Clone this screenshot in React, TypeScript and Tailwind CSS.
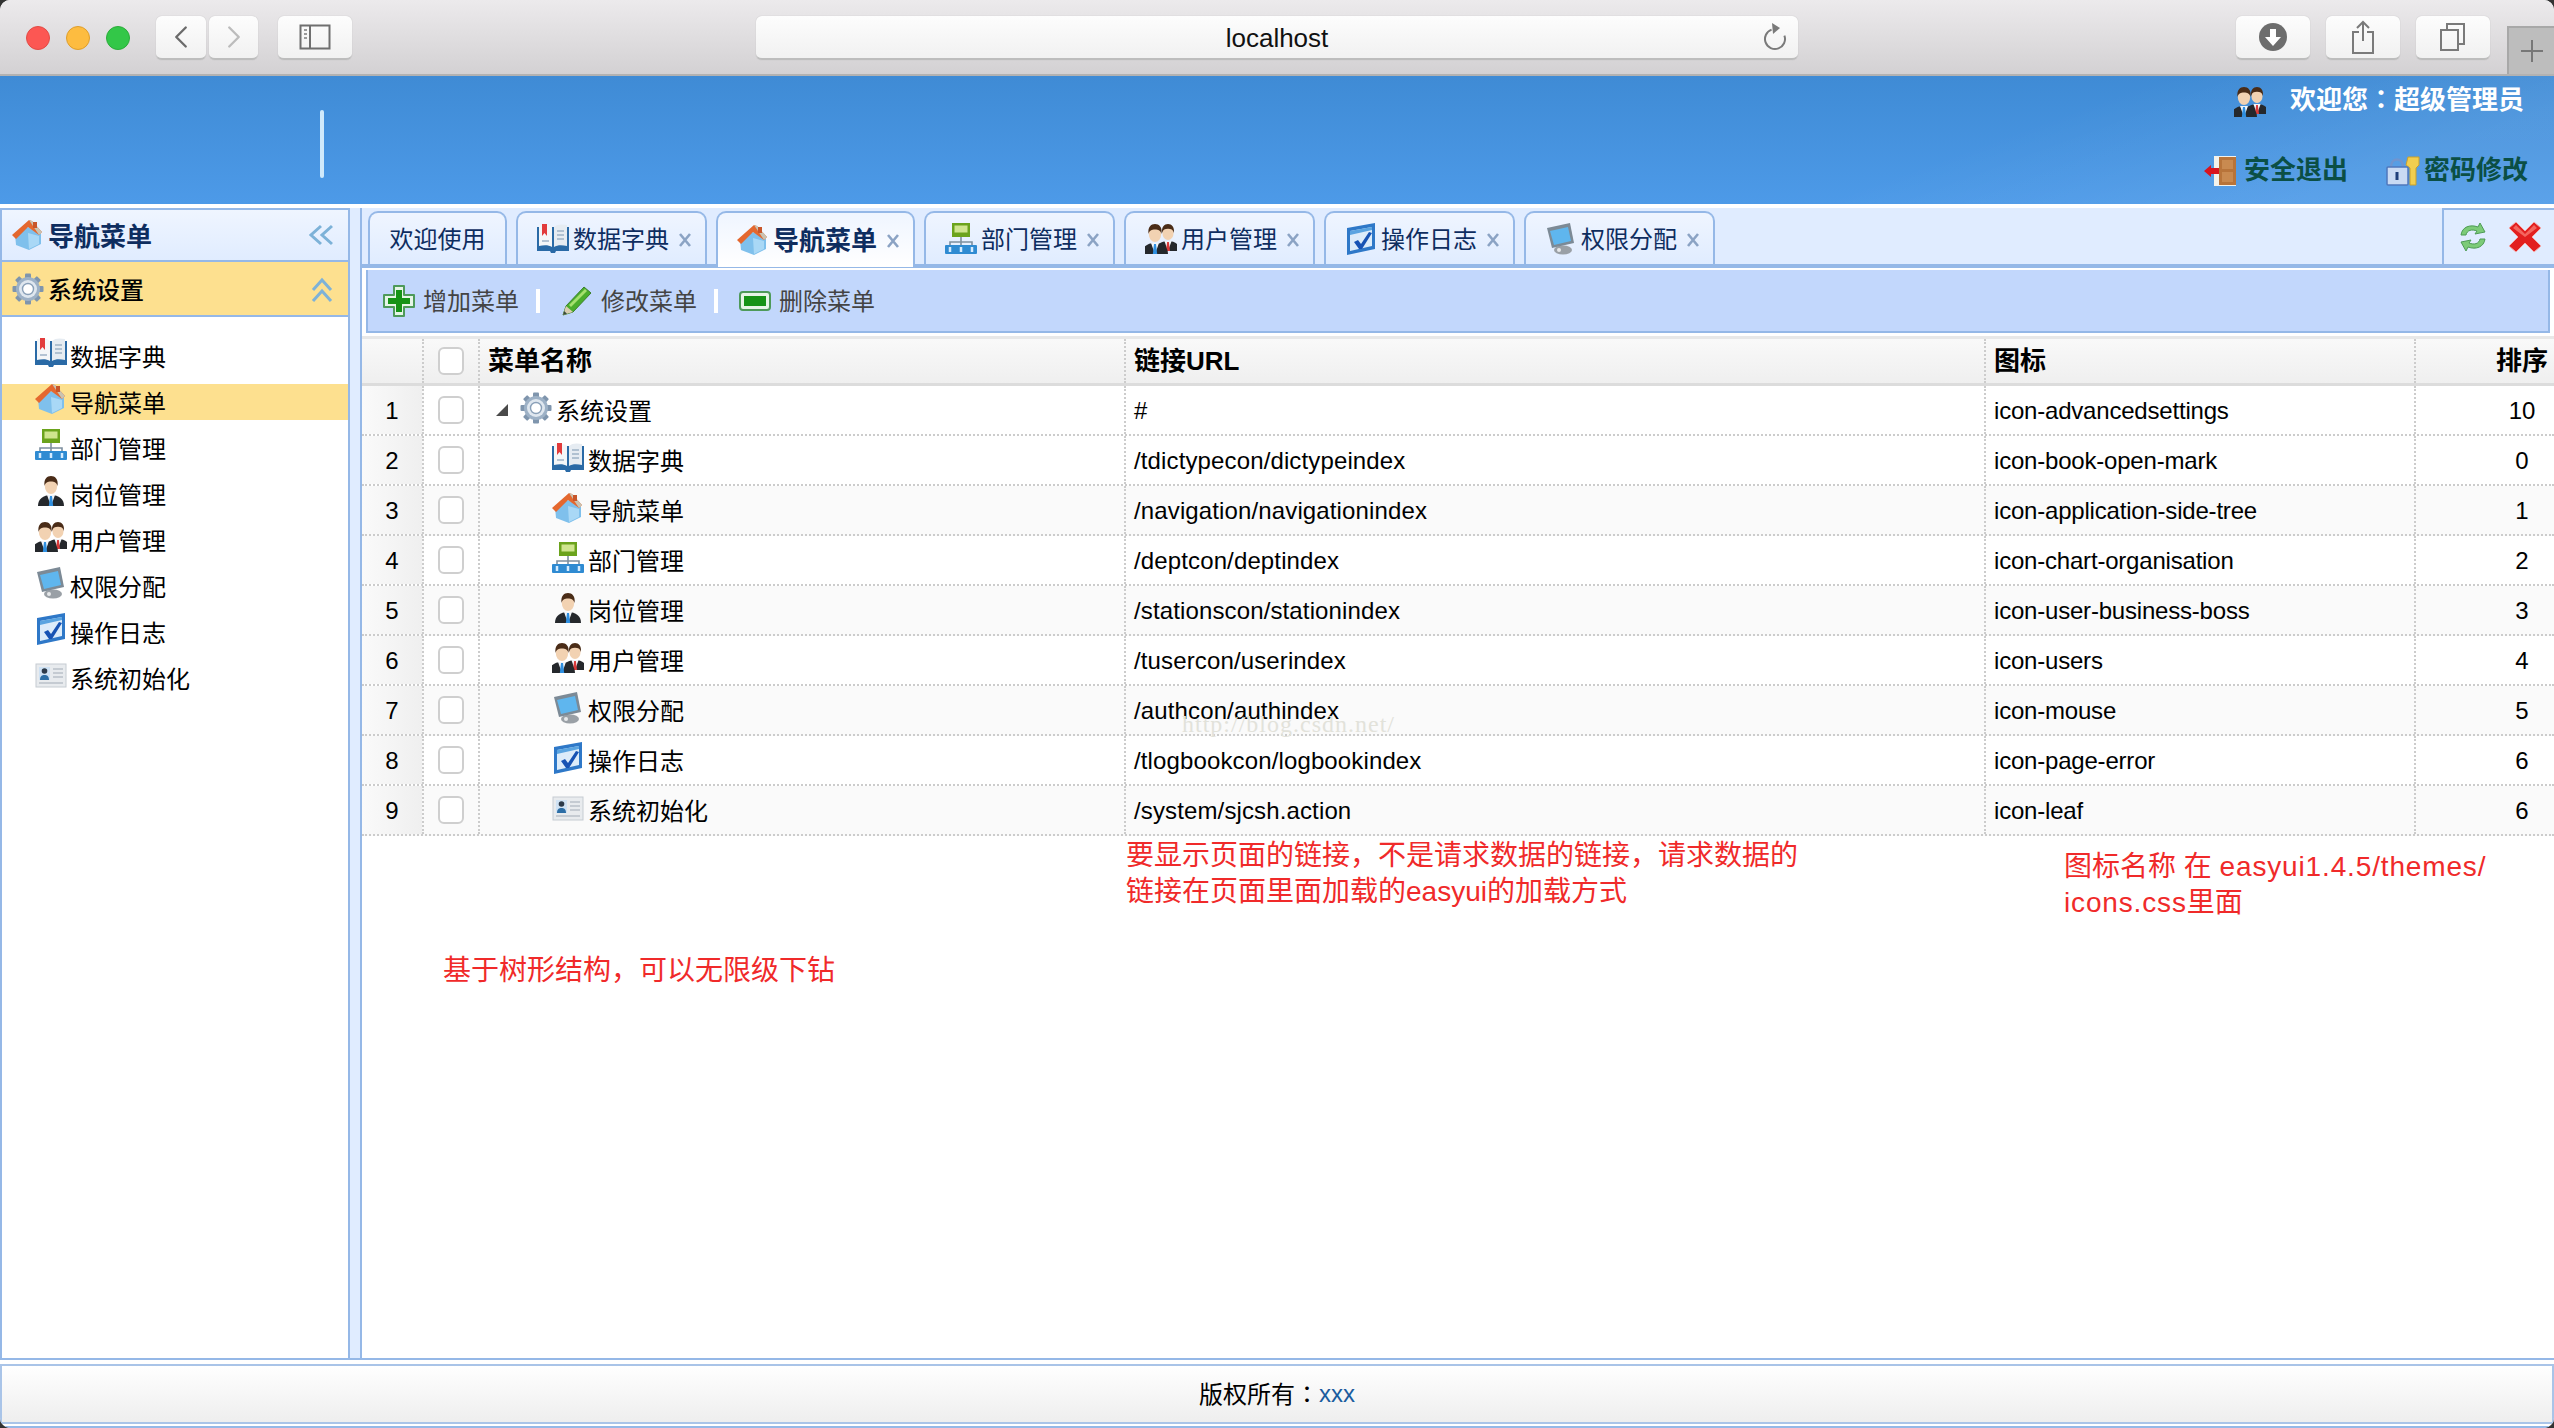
import { ChevronLeft, ChevronRight } from "lucide-react";
import type { ReactNode } from "react";

type IconName = "book" | "house" | "org" | "user" | "users" | "monitor" | "log" | "card" | "gear";

function Gear({ size = 32 }: { size?: number }) {
  const teeth = [0, 45, 90, 135, 180, 225, 270, 315];
  return (
    <svg width={size} height={size} viewBox="0 0 32 32" className="shrink-0 blur-[0.6px]">
      {teeth.map((a) => (
        <rect key={a} x="13" y="0.500" width="6" height="7" rx="1" fill="#7f95ad" transform={`rotate(${a} 16 16)`} />
      ))}
      <circle cx="16" cy="16" r="12" fill="#9db1c6" />
      <circle cx="16" cy="16" r="9" fill="#dfe7ef" />
      <circle cx="16" cy="16" r="5.500" fill="#fff" stroke="#8aa0b8" strokeWidth="1.400" />
    </svg>
  );
}

function Person({ x = 16, tie = "#2f8fe0", scale = 1 }: { x?: number; tie?: string; scale?: number }) {
  return (
    <g transform={`translate(${x} 0) scale(${scale}) translate(-16 0)`}>
      <path d="M3 31c0-7 5-11 13-11s13 4 13 11z" fill="#25282c" />
      <path d="M12 20h8l-4 11z" fill="#f3f6fa" />
      <path d="M15 21h2l1.200 10h-4.400z" fill={tie} />
      <ellipse cx="16" cy="11" rx="6.200" ry="8" fill="#f2d2b2" />
      <path d="M9.500 11C8.500 4 12 1 16 1s7.500 3 6.500 10c-1-3.500-3-4.500-6.500-4.500S10.500 7.500 9.500 11z" fill="#4a2c17" />
    </g>
  );
}

function MenuIcon({ name, size = 32 }: { name: IconName; size?: number }) {
  if (name === "gear") return <Gear size={size} />;
  return (
    <svg width={size} height={size} viewBox="0 0 32 32" className="shrink-0 blur-[0.6px]">
      {name === "book" && (
        <>
          <path d="M0 4h32v24H19l-1 2h-4l-1-2H0z" fill="#2a6aa6" />
          <path d="M2 2c5-1 10-1 13 2v20c-3-2-8-2-13-1z" fill="#f4f6f8" />
          <path d="M30 2c-5-1-10-1-13 2v20c3-2 8-2 13-1z" fill="#e6ecf2" />
          <path d="M5 1h5v12l-2.500-3L5 13z" fill="#e23b3b" />
          <path d="M20 8h7M20 12h7M20 16h7M5 18h7" stroke="#9fb2c6" strokeWidth="1.500" />
        </>
      )}
      {name === "house" && (
        <>
          <path d="M3 15 16 8l13 7v10l-12 6-13-5z" fill="#7fc0ec" />
          <path d="M16 14 27 17v8l-10 5z" fill="#a9d8f6" />
          <path d="M0 16 17 1l3 1 10 11-3 3L16 8 4 20z" fill="#e4682f" />
          <path d="M17 1l3 1 10 11-3 3z" fill="#c9c3b2" />
          <path d="M21 3h4v6h-4z" fill="#c8562a" />
        </>
      )}
      {name === "org" && (
        <>
          <rect x="7" y="0" width="18" height="14" fill="#6ba31c" />
          <rect x="9.500" y="2.500" width="13" height="7" fill="#cfe58e" />
          <path d="M16 14v4M5 23v-4h22v4M16 18v5" stroke="#7d8f9f" strokeWidth="1.600" fill="none" />
          <rect x="0" y="22" width="32" height="9" rx="1" fill="#2f8bd2" />
          <path d="M5 24v5M16 24v5M27 24v5" stroke="#d5ecff" strokeWidth="2.500" />
        </>
      )}
      {name === "user" && <Person />}
      {name === "users" && (
        <>
          <Person x={23} tie="#d93a3a" scale={0.9} />
          <Person x={10} />
        </>
      )}
      {name === "monitor" && (
        <>
          <ellipse cx="18" cy="27" rx="9" ry="4.500" fill="#9aa0a6" />
          <circle cx="14" cy="27" r="2" fill="#e6e8ea" />
          <path d="M2 5 25 0l4 20-22 5z" fill="#7c8a96" />
          <path d="M5 8 23 4l3 14-17 4z" fill="#5fb6ee" />
        </>
      )}
      {name === "log" && (
        <>
          <path d="M2 5 30 0v26L2 32z" fill="#2e78c8" />
          <path d="M5 8 27 4v19L5 28z" fill="#dcecfa" />
          <path d="M5 8 27 4v3L5 12z" fill="#5aa4e0" />
          <path d="M9 19l4-2 3 4 8-12 3 1-10 16h-3z" fill="#1753b4" />
        </>
      )}
      {name === "card" && (
        <>
          <rect x="1" y="5" width="30" height="23" fill="#e8ebee" stroke="#c6ccd2" />
          <rect x="4" y="8" width="11" height="13" fill="#cfe2f4" />
          <circle cx="9.500" cy="12" r="2.800" fill="#2c3a4a" />
          <path d="M5 21c0-4 2-5 4.500-5s4.500 1 4.500 5z" fill="#2c6ea6" />
          <path d="M18 10h10M18 14h10M18 18h10M4 24h24" stroke="#b9c1c9" strokeWidth="1.500" />
        </>
      )}
    </svg>
  );
}

function PlusIcon() {
  return (
    <svg width="32" height="32" viewBox="0 0 32 32" className="shrink-0 blur-[0.4px]">
      <path d="M11 1h10v9h10v12H21v9H11v-9H1V10h10z" fill="#e6f5e6" stroke="#4e9a5a" strokeWidth="2" strokeLinejoin="round" />
      <path d="M13 5h6v8h8v6h-8v8h-6v-8H5v-6h8z" fill="#169316" />
    </svg>
  );
}

function PencilIcon() {
  return (
    <svg width="32" height="32" viewBox="0 0 32 32" className="shrink-0 blur-[0.3px]">
      <path d="M2 30l3-9L23 2l7 6-18 19z" fill="#4aad2c" stroke="#3a7f2a" strokeWidth="1" />
      <path d="M8 20 24 4l2 2L10 22z" fill="#a5e06e" />
      <path d="M2 30l3-9 7 6z" fill="#d9cdb0" />
      <path d="M2 30l1.200-4 2.800 2.800z" fill="#3a4a3a" />
    </svg>
  );
}

function MinusIcon() {
  return (
    <svg width="32" height="32" viewBox="0 0 32 32" className="shrink-0 blur-[0.4px]">
      <rect x="1" y="7" width="30" height="18" rx="3" fill="#e6f5e6" stroke="#4e9a5a" strokeWidth="2" />
      <rect x="5" y="11" width="22" height="10" fill="#169316" />
    </svg>
  );
}

function RefreshIcon() {
  return (
    <svg width="30" height="32" viewBox="0 0 30 32" className="shrink-0 blur-[0.4px]">
      <path d="M3 14C4 6 12 3 20 6l2-4 5 9-10 2 2-3C14 8 9 9 8 14z" fill="#7ccb78" stroke="#4d9a55" strokeWidth="1" />
      <path d="M27 18c-1 8-9 11-17 8l-2 4-5-9 10-2-2 3c5 2 10 1 11-4z" fill="#7ccb78" stroke="#4d9a55" strokeWidth="1" />
    </svg>
  );
}

function RedCloseIcon() {
  return (
    <svg width="34" height="32" viewBox="0 0 34 32" className="shrink-0 blur-[0.3px]">
      <path d="M8 1l9 9 9-9 7 6-9 9 9 9-7 6-9-9-9 9-7-6 9-9-9-9z" fill="#e21f1f" stroke="#f2a9a9" strokeWidth="1" strokeLinejoin="round" />
      <path d="M8 4l9 9 9-9 3 3-12 9L5 7z" fill="#f4665f" />
    </svg>
  );
}

function DoorIcon() {
  return (
    <svg width="32" height="32" viewBox="0 0 32 32" className="shrink-0 blur-[0.3px]">
      <rect x="10" y="1" width="22" height="30" fill="#f2f2ec" />
      <path d="M15 2h17v28H15z" fill="#b8743a" />
      <path d="M18 5h11v9H18zM18 17h11v10H18z" fill="#c98a50" />
      <path d="M0 16l7-6v3h8v6H7v3z" fill="#d8141f" />
    </svg>
  );
}

function KeyIcon() {
  return (
    <svg width="34" height="32" viewBox="0 0 34 32" className="shrink-0 blur-[0.3px]">
      <path d="M22 2h11v8l-3 3v17h-6V13l-4-3z" fill="#f2ce4f" stroke="#c9a02c" strokeWidth="1" />
      <path d="M5 12c0-10 12-10 12 0" fill="none" stroke="#6f95cf" strokeWidth="2.500" />
      <rect x="1" y="12" width="21" height="18" rx="1" fill="#c9daf3" stroke="#4f78bd" strokeWidth="1.500" />
      <rect x="9.500" y="17" width="3" height="8" fill="#1f3f7a" />
    </svg>
  );
}

function DoubleChevron({ up = false }: { up?: boolean }) {
  return (
    <svg width="24" height="28" viewBox="0 0 24 28" className={up ? "shrink-0" : "shrink-0 -rotate-90"}>
      <path d="M3 13 12 3l9 10M3 24l9-10 9 10" fill="none" stroke="#7db2d8" strokeWidth="3" />
    </svg>
  );
}

function ToolbarButton({ icon, label }: { icon: ReactNode; label: string }) {
  return (
    <div className="flex items-center gap-[8px] text-[#444]">
      {icon}
      <span className="mt-[2px]">{label}</span>
    </div>
  );
}

function Tab({ icon, label, active = false }: { icon: IconName; label: string; active?: boolean }) {
  return (
    <div
      className={
        "relative flex shrink-0 items-center rounded-t-[10px] border-x-2 border-t-2 border-[#95b8e7] pl-[19px] text-[#0e2d5f] " +
        (active
          ? "z-10 -mb-[3px] h-[56px] w-[199px] bg-[linear-gradient(to_bottom,#eff5ff,#ffffff)]"
          : "h-[53px] w-[191px] bg-[linear-gradient(to_bottom,#eff5ff,#e0ecff)]")
      }
    >
      <MenuIcon name={icon} />
      <span className={"ml-[4px] mt-[2px] " + (active ? "text-[26px] font-bold" : "")}>{label}</span>
      <svg width="14" height="16" viewBox="0 0 14 16" className="ml-[9px] mt-[2px] shrink-0">
        <path d="M2 2l10 12M12 2 2 14" stroke="#8ba3c4" strokeWidth="2.600" />
      </svg>
    </div>
  );
}

const SIDE_ITEMS: { icon: IconName; label: string; active?: boolean }[] = [
  { icon: "book", label: "数据字典" },
  { icon: "house", label: "导航菜单", active: true },
  { icon: "org", label: "部门管理" },
  { icon: "user", label: "岗位管理" },
  { icon: "users", label: "用户管理" },
  { icon: "monitor", label: "权限分配" },
  { icon: "log", label: "操作日志" },
  { icon: "card", label: "系统初始化" },
];

const ROWS: { icon: IconName; name: string; url: string; cls: string; sort: number }[] = [
  { icon: "gear", name: "系统设置", url: "#", cls: "icon-advancedsettings", sort: 10 },
  { icon: "book", name: "数据字典", url: "/tdictypecon/dictypeindex", cls: "icon-book-open-mark", sort: 0 },
  { icon: "house", name: "导航菜单", url: "/navigation/navigationindex", cls: "icon-application-side-tree", sort: 1 },
  { icon: "org", name: "部门管理", url: "/deptcon/deptindex", cls: "icon-chart-organisation", sort: 2 },
  { icon: "user", name: "岗位管理", url: "/stationscon/stationindex", cls: "icon-user-business-boss", sort: 3 },
  { icon: "users", name: "用户管理", url: "/tusercon/userindex", cls: "icon-users", sort: 4 },
  { icon: "monitor", name: "权限分配", url: "/authcon/authindex", cls: "icon-mouse", sort: 5 },
  { icon: "log", name: "操作日志", url: "/tlogbookcon/logbookindex", cls: "icon-page-error", sort: 6 },
  { icon: "card", name: "系统初始化", url: "/system/sjcsh.action", cls: "icon-leaf", sort: 6 },
];

function Checkbox() {
  return <div className="h-[28px] w-[26px] rounded-[6px] border-2 border-[#cfcfcf] bg-white" />;
}

function BrowserButton({ children, className }: { children: ReactNode; className: string }) {
  return (
    <div
      className={
        "flex h-[44px] items-center justify-center rounded-[6px] border-b-2 border-[#bdbdbd] bg-[linear-gradient(to_bottom,#fdfdfd,#f1f1f1)] shadow-[0_0_1px_#aaa] " +
        className
      }
    >
      {children}
    </div>
  );
}

export default function App() {
  return (
    <div className="h-[1428px] w-[2554px] overflow-hidden bg-[#333] font-['Liberation_Sans','Noto_Sans_CJK_SC',sans-serif] text-[24px] text-black">
      <div className="relative flex h-full flex-col overflow-hidden rounded-[10px] bg-white">
        {/* browser chrome */}
        <div className="relative flex h-[76px] shrink-0 items-center border-b-2 border-[#b2b2b2] bg-[linear-gradient(to_bottom,#eceaec,#d3d1d3)] pl-[26px] pt-[2px]">
          <div className="flex gap-[16px]">
            <span className="h-[24px] w-[24px] rounded-full border border-[#e24b45] bg-[#fc5753]" />
            <span className="h-[24px] w-[24px] rounded-full border border-[#df9e2b] bg-[#fdbc40]" />
            <span className="h-[24px] w-[24px] rounded-full border border-[#2bac3a] bg-[#33c748]" />
          </div>
          <BrowserButton className="ml-[26px] w-[50px]">
            <ChevronLeft size={38} strokeWidth={1.5} className="text-[#6b6b6b]" />
          </BrowserButton>
          <BrowserButton className="ml-[3px] w-[49px]">
            <ChevronRight size={38} strokeWidth={1.5} className="text-[#bcbcbc]" />
          </BrowserButton>
          <BrowserButton className="ml-[20px] w-[74px]">
            <svg width="32" height="26" viewBox="0 0 32 26">
              <rect x="1.500" y="1.500" width="29" height="23" fill="none" stroke="#6f6f6f" strokeWidth="2" />
              <path d="M11 1.500v23" stroke="#6f6f6f" strokeWidth="2" />
              <path d="M5 6h3M5 10h3M5 14h3" stroke="#9a9a9a" strokeWidth="2" />
            </svg>
          </BrowserButton>
          <BrowserButton className="relative ml-[404px] w-[1042px]">
            <span className="mt-[3px] text-[26px] text-[#111]">localhost</span>
            <svg width="26" height="30" viewBox="0 0 26 30" className="absolute right-[10px] top-[6px]">
              <path d="M13 7a10 10 0 1 0 10 10" fill="none" stroke="#7a7a7a" strokeWidth="2" transform="rotate(-20 13 17)" />
              <path d="M10 1l8 5-7 6z" fill="#7a7a7a" />
            </svg>
          </BrowserButton>
          <BrowserButton className="ml-[438px] w-[74px]">
            <svg width="28" height="28" viewBox="0 0 28 28">
              <circle cx="14" cy="14" r="14" fill="#6d6d6d" />
              <path d="M11 6h6v8h5l-8 9-8-9h5z" fill="#fff" />
            </svg>
          </BrowserButton>
          <BrowserButton className="ml-[16px] w-[74px]">
            <svg width="24" height="34" viewBox="0 0 24 34">
              <path d="M8 12H2v21h20V12h-6M12 21V2M6 8l6-6 6 6" fill="none" stroke="#7a7a7a" strokeWidth="2" />
            </svg>
          </BrowserButton>
          <BrowserButton className="ml-[16px] w-[74px]">
            <svg width="26" height="28" viewBox="0 0 26 28">
              <path d="M7 6V1h17v20h-5" fill="none" stroke="#7a7a7a" strokeWidth="2" />
              <rect x="1" y="7" width="17" height="20" fill="none" stroke="#7a7a7a" strokeWidth="2" />
            </svg>
          </BrowserButton>
          <div className="ml-[17px] flex h-[48px] flex-1 items-center justify-center self-end border-l-2 border-t-2 border-[#a8a8a8] bg-[#bdbdbd]">
            <svg width="24" height="24" viewBox="0 0 24 24">
              <path d="M12 1v22M1 12h22" stroke="#777" strokeWidth="2" />
            </svg>
          </div>
        </div>

        {/* app header */}
        <div className="relative h-[128px] shrink-0 bg-[linear-gradient(to_bottom,#3f8bd5,#4d9ae8)]">
          <div className="absolute left-[320px] top-[34px] h-[68px] w-[4px] rounded-full bg-[#cfe9fb]" />
          <div className="absolute inset-y-0 right-0 w-[1000px] bg-[linear-gradient(160deg,rgba(255,255,255,0)_45%,rgba(255,255,255,0.08)_80%)]" />
          <div className="absolute left-[2234px] top-[8px] flex items-center gap-[24px] text-[26px] font-bold text-white">
            <MenuIcon name="users" />
            <span className="-mt-[6px]">
              欢迎您<span className="font-['Noto_Sans_CJK_TC',sans-serif]">：</span>超级管理员
            </span>
          </div>
          <div className="absolute left-[2204px] top-[75px] flex items-center text-[26px] font-bold text-[#0b4f45]">
            <DoorIcon />
            <span className="ml-[8px]">安全退出</span>
            <span className="ml-[38px]">
              <KeyIcon />
            </span>
            <span className="ml-[4px]">密码修改</span>
          </div>
        </div>

        <div className="h-[4px] shrink-0 bg-white" />

        {/* body */}
        <div className="relative flex min-h-0 flex-1">
          {/* west panel */}
          <div className="flex w-[350px] shrink-0 flex-col border-x-2 border-[#95b8e7]">
            <div className="flex h-[54px] shrink-0 items-center border-y-2 border-[#95b8e7] bg-[linear-gradient(to_bottom,#eff5ff,#e0ecff)] pl-[10px] pr-[14px] text-[26px] font-bold text-[#0e2d5f]">
              <MenuIcon name="house" />
              <span className="ml-[4px] mt-[4px]">导航菜单</span>
              <span className="ml-auto">
                <DoubleChevron />
              </span>
            </div>
            <div className="flex h-[55px] shrink-0 items-center border-b-2 border-[#95b8e7] bg-[#fde08f] pl-[10px] pr-[14px] font-medium">
              <Gear />
              <span className="ml-[4px] mt-[5px]">系统设置</span>
              <span className="ml-auto mt-[4px]">
                <DoubleChevron up />
              </span>
            </div>
            <div className="flex flex-1 flex-col gap-[10px] pt-[21px]">
              {SIDE_ITEMS.map((item) => (
                <div
                  key={item.label}
                  className={"flex h-[36px] items-center pl-[33px] " + (item.active ? "bg-[#fde08f]" : "")}
                >
                  <span className="-mt-[6px]">
                    <MenuIcon name={item.icon} />
                  </span>
                  <span className="ml-[3px] mt-[4px]">{item.label}</span>
                </div>
              ))}
            </div>
          </div>

          {/* splitter */}
          <div className="w-[12px] shrink-0 border-r-2 border-[#95b8e7] bg-[#e0ecff]" />

          {/* center */}
          <div className="relative flex min-w-0 flex-1 flex-col">
            <div className="flex h-[60px] shrink-0 items-end gap-[9px] border-b-[4px] border-[#95b8e7] bg-[#e0ecff] pl-[6px]">
              <div className="flex h-[53px] w-[139px] shrink-0 items-center justify-center rounded-t-[10px] border-x-2 border-t-2 border-[#95b8e7] bg-[linear-gradient(to_bottom,#eff5ff,#e0ecff)] text-[#0e2d5f]">
                <span className="mt-[2px]">欢迎使用</span>
              </div>
              <Tab icon="book" label="数据字典" />
              <Tab icon="house" label="导航菜单" active />
              <Tab icon="org" label="部门管理" />
              <Tab icon="users" label="用户管理" />
              <Tab icon="log" label="操作日志" />
              <Tab icon="monitor" label="权限分配" />
              <div className="ml-auto flex h-[56px] w-[112px] shrink-0 items-center gap-[20px] self-start border-l-2 border-t-2 border-[#95b8e7] pl-[14px]">
                <RefreshIcon />
                <RedCloseIcon />
              </div>
            </div>

            <div className="flex min-h-0 flex-1 flex-col pt-[2px]">
              <div className="mx-[4px] flex h-[63px] shrink-0 items-center border-x-2 border-b-2 border-[#95b8e7] bg-[#c2d7fc] pl-[15px]">
                <ToolbarButton icon={<PlusIcon />} label="增加菜单" />
                <span className="ml-[17px] h-[24px] w-[4px] bg-white" />
                <span className="ml-[21px]">
                  <ToolbarButton icon={<PencilIcon />} label="修改菜单" />
                </span>
                <span className="ml-[17px] h-[24px] w-[4px] bg-white" />
                <span className="ml-[21px]">
                  <ToolbarButton icon={<MinusIcon />} label="删除菜单" />
                </span>
              </div>

              {/* grid head */}
              <div className="mt-[3px] flex h-[50px] shrink-0 border-y-[3px] border-t-[#e8e8e8] border-b-[#dcdcdc] bg-[linear-gradient(to_bottom,#f9f9f9,#efefef)] text-[26px] font-bold">
                <div className="w-[62px] shrink-0 border-r-2 border-dotted border-[#ccc]" />
                <div className="flex w-[56px] shrink-0 items-center justify-center border-r-2 border-dotted border-[#ccc]">
                  <Checkbox />
                </div>
                <div className="flex w-[646px] shrink-0 items-center border-r-2 border-dotted border-[#ccc] pl-[8px]">菜单名称</div>
                <div className="flex w-[860px] shrink-0 items-center border-r-2 border-dotted border-[#ccc] pl-[8px]">链接URL</div>
                <div className="flex w-[430px] shrink-0 items-center border-r-2 border-dotted border-[#ccc] pl-[8px]">图标</div>
                <div className="flex flex-1 items-center justify-end pr-[6px]">排序</div>
              </div>

              {ROWS.map((row, index) => (
                <div
                  key={row.name}
                  className={
                    "flex h-[50px] shrink-0 border-b-2 border-dotted border-[#ccc] " +
                    (index % 2 === 0 && index > 0 ? "bg-[#fafafa]" : "bg-white")
                  }
                >
                  <div className="flex w-[62px] shrink-0 items-center justify-center border-r-2 border-dotted border-[#ccc] bg-[linear-gradient(to_right,#fafafa,#efefef)] pt-[2px]">
                    {index + 1}
                  </div>
                  <div className="flex w-[56px] shrink-0 items-center justify-center border-r-2 border-dotted border-[#ccc]">
                    <Checkbox />
                  </div>
                  <div className="flex w-[646px] shrink-0 items-center border-r-2 border-dotted border-[#ccc]">
                    {index === 0 ? (
                      <>
                        <svg width="14" height="14" viewBox="0 0 14 14" className="ml-[15px] shrink-0">
                          <path d="M13 1v12H1z" fill="#4a4a4a" />
                        </svg>
                        <span className="-mt-[4px] ml-[11px]">
                          <MenuIcon name={row.icon} />
                        </span>
                        <span className="ml-[4px] mt-[4px]">{row.name}</span>
                      </>
                    ) : (
                      <>
                        <span className="-mt-[4px] ml-[72px]">
                          <MenuIcon name={row.icon} />
                        </span>
                        <span className="ml-[4px] mt-[4px]">{row.name}</span>
                      </>
                    )}
                  </div>
                  <div className="flex w-[860px] shrink-0 items-center border-r-2 border-dotted border-[#ccc] pl-[8px] pt-[2px] tracking-[0.13px]">{row.url}</div>
                  <div className="flex w-[430px] shrink-0 items-center border-r-2 border-dotted border-[#ccc] pl-[8px] pt-[2px] tracking-[-0.2px]">{row.cls}</div>
                  <div className="flex flex-1 items-center justify-end pr-[14px] pt-[2px]">
                    <span className="w-[36px] text-center">{row.sort}</span>
                  </div>
                </div>
              ))}
            </div>

            {/* annotations drawn on top of the page */}
            <div className="absolute left-[820px] top-[498px] font-['Liberation_Serif',serif] text-[24px] tracking-[1px] text-[#e2e2da]">
              http://blog.csdn.net/
            </div>
            <div className="absolute left-[764px] top-[630px] text-[28px] leading-[36px] text-[#f02a2a]">
              要显示页面的链接，不是请求数据的链接，请求数据的
              <br />
              链接在页面里面加载的easyui的加载方式
            </div>
            <div className="absolute left-[1702px] top-[641px] text-[28px] leading-[36px] text-[#f02a2a]">
              图标名称 在 <span className="tracking-[0.85px]">easyui1.4.5/themes/</span>
              <br />
              <span className="tracking-[0.85px]">icons.css</span>里面
            </div>
            <div className="absolute left-[81px] top-[745px] text-[28px] leading-[36px] text-[#f02a2a]">
              基于树形结构，可以无限级下钻
            </div>
          </div>
        </div>

        {/* footer */}
        <div className="h-[70px] shrink-0 border-t-2 border-[#95b8e7] pt-[4px]">
          <div className="flex h-[60px] items-center justify-center border-2 border-[#a9c4e8] bg-[linear-gradient(to_bottom,#ffffff,#eeeeee)]">
            <span>
              版权所有<span className="font-['Noto_Sans_CJK_TC',sans-serif]">：</span>
            </span>
            <span className="text-[#1b5c9e]">xxx</span>
          </div>
          <div className="mt-[2px] h-[2px] bg-[#95b8e7]" />
        </div>
      </div>
    </div>
  );
}
